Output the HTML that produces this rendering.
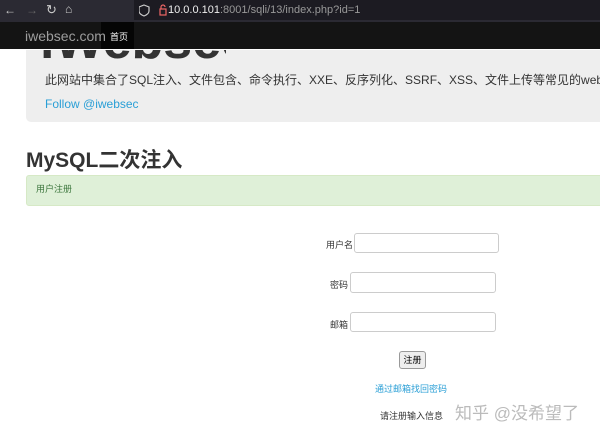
<!DOCTYPE html>
<html><head><meta charset="utf-8"><style>
*{margin:0;padding:0;box-sizing:border-box}
body{width:600px;height:436px;overflow:hidden;background:#fff;font-family:"Liberation Sans","Noto Sans CJK SC",sans-serif;position:relative}
.a{position:absolute;white-space:nowrap}
.t{z-index:5}
input{position:absolute;border:1px solid #ccc;border-radius:3px;background:#fff}
</style></head><body>
<div class="a" style="left:26px;top:50px;width:580px;height:72px;background:#eee;border-radius:0 0 5px 5px"></div>
<div class="a" style="left:26px;top:50px;width:200px;height:16px;overflow:hidden">
<div style="position:relative;left:14px;top:-39px;font-size:52px;line-height:60px;font-weight:bold;color:#333;white-space:nowrap">iWebsec</div>
</div>
<div class="a" style="left:45px;top:71px;font-size:12px;color:#333">此网站中集合了SQL注入、文件包含、命令执行、XXE、反序列化、SSRF、XSS、文件上传等常见的web漏洞</div>
<div class="a" style="left:45px;top:97px;font-size:12px;color:#2a9fd6">Follow @iwebsec</div>
<div class="a t" style="left:0;top:0;width:600px;height:22px;background:#2b2a33"></div>
<div class="a t" style="left:134px;top:0;width:466px;height:20px;background:#1c1b22"></div>
<div class="a t" style="left:4px;top:3px;color:#ccc;font-size:12px">←</div>
<div class="a t" style="left:26px;top:3px;color:#666;font-size:12px">→</div>
<div class="a t" style="left:46px;top:2px;color:#ccc;font-size:13px">↻</div>
<div class="a t" style="left:65px;top:2px;color:#ccc;font-size:12px">⌂</div>
<svg class="a t" style="left:139px;top:3px" width="30" height="14"><path d="M5 2 L10 4 L10 8 Q10 11 5 13 Q0 11 0 8 L0 4 Z" fill="none" stroke="#ccc" stroke-width="1.2"/><rect x="21" y="6" width="6" height="6" fill="none" stroke="#e66" stroke-width="1.2"/><path d="M22 6 V4 a2 2 0 0 1 4 0" fill="none" stroke="#e66" stroke-width="1.2"/></svg>
<div class="a t" style="left:168px;top:4px;font-size:11px;color:#999"><span style="color:#eee">10.0.0.101</span>:8001/sqli/13/index.php?id=1</div>
<div class="a t" style="left:0;top:22px;width:600px;height:27px;background:#141414"></div>
<div class="a t" style="left:101px;top:22px;width:33px;height:27px;background:#050505"></div>
<div class="a t" style="left:25px;top:28px;font-size:14px;color:#9d9d9d">iwebsec.com</div>
<div class="a t" style="left:110px;top:30px;font-size:9px;color:#fff">首页</div>
<div class="a" style="left:26px;top:144px;font-size:21px;font-weight:bold;color:#333">MySQL二次注入</div>
<div class="a" style="left:26px;top:175px;width:580px;height:31px;background:#dff0d8;border:1px solid #d6e9c6;border-radius:3px"></div>
<div class="a" style="left:36px;top:182px;font-size:9px;color:#3c763d">用户注册</div>
<div class="a" style="left:326px;top:238px;font-size:9px;color:#333">用户名</div>
<input style="left:354px;top:233px;width:145px;height:20px">
<div class="a" style="left:330px;top:278px;font-size:9px;color:#333">密码</div>
<input style="left:350px;top:272px;width:146px;height:21px">
<div class="a" style="left:330px;top:318px;font-size:9px;color:#333">邮箱</div>
<input style="left:350px;top:312px;width:146px;height:20px">
<div class="a" style="left:399px;top:351px;width:27px;height:18px;background:#eee;border:1px solid #999;border-radius:3px;font-size:9px;color:#000;text-align:center;line-height:16px">注册</div>
<div class="a" style="left:375px;top:382px;font-size:9px;color:#2a9fd6">通过邮箱找回密码</div>
<div class="a" style="left:380px;top:409px;font-size:9px;color:#333">请注册输入信息</div>
<div class="a" style="left:455px;top:399px;font-size:17px;color:#bbb">知乎 @没希望了</div>
</body></html>
